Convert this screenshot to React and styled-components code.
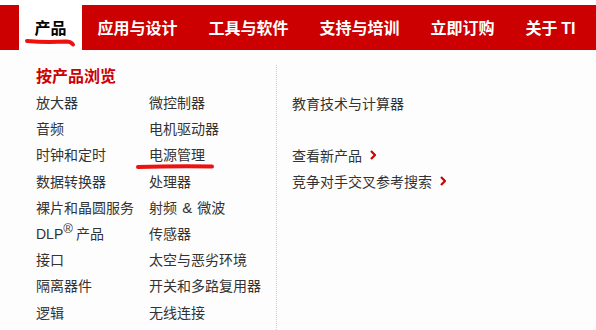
import React from 'react';
import styled, { createGlobalStyle } from 'styled-components';

const GlobalStyle = createGlobalStyle`
    * { box-sizing: border-box; }
    body {
        margin: 0; background: #fff;
        font-family: "Noto Sans CJK SC", "Noto Sans", "Liberation Sans", sans-serif;
    }
    ul { list-style: none; margin: 0; padding: 0; }
`;

const Page = styled.div`
    position: relative;
    width: 596px; height: 330px; padding-top: 5px;
    overflow: hidden;
`;

const NavBar = styled.ul`
    display: flex; height: 45px; padding-left: 19px;
    background-color: #cc0000;
`;

const NavItem = styled.li`
    padding: 0 15.5px; line-height: 45px;
    font-size: 16px; font-weight: bold; white-space: nowrap;
    color: ${(p) => (p.$active ? '#000' : '#fff')};
    background-color: ${(p) => (p.$active ? '#fff' : 'transparent')};
    .latin { font-family: "Liberation Sans", sans-serif; font-weight: bold; }
`;

const Panel = styled.div`
    display: flex; height: 280px; padding-top: 15px;
    background-color: #fdfdfd;
`;

const LeftCol = styled.div`
    width: 277px; padding-left: 36px;
    border-right: 1px dotted #cfcfcf;
`;

const Heading = styled.h3`
    margin: 0 0 4px; height: 20px; line-height: 20px;
    font-size: 16px; font-weight: bold; color: #cc0000;
`;

const ProductGrid = styled.ul`
    display: grid; grid-template-columns: 113px 1fr;
`;

const Item = styled.li`
    height: 26.2px; line-height: 26.2px;
    font-size: 14px; color: #333; white-space: nowrap;
    sup { font-size: 13px; line-height: 0; font-family: "Liberation Sans", sans-serif; }
    .latin { font-family: "Liberation Sans", sans-serif; }
    .amp { font-family: "Liberation Sans", sans-serif; font-size: 15px; margin: 0 2px; }
`;

const RightCol = styled.ul`
    padding: 24.5px 0 0 15px;
`;

const LinkItem = styled(Item)`
    display: flex; align-items: center; gap: 8px;
    margin-top: ${(p) => (p.$gap ? '26.2px' : '0')};
`;

const Annotation = styled.svg`
    position: absolute; left: 0; top: 0;
    pointer-events: none;
`;

const Chevron = () => (
    <svg width="6" height="10" viewBox="0 0 6 10">
        <polyline points="1,1 5,5 1,9" fill="none" stroke="#cc0000" strokeWidth="2.2" />
    </svg>
);

const navs = ['产品', '应用与设计', '工具与软件', '支持与培训', '立即订购'];

const products = [
    ['放大器', '微控制器'],
    ['音频', '电机驱动器'],
    ['时钟和定时', '电源管理'],
    ['数据转换器', '处理器'],
    ['裸片和晶圆服务', 'RF'],
    ['DLP', '传感器'],
    ['接口', '太空与恶劣环境'],
    ['隔离器件', '开关和多路复用器'],
    ['逻辑', '无线连接'],
];

function renderProduct(p) {
    if (p === 'DLP') return <><span className="latin">DLP</span><sup>®</sup> 产品</>;
    if (p === 'RF') return <>射频 <span className="amp">&amp;</span> 微波</>;
    return p;
}

function App() {
    return (
        <>
            <GlobalStyle />
            <Page>
                <NavBar>
                    {navs.map((n, i) => (
                        <NavItem key={n} $active={i === 0}>{n}</NavItem>
                    ))}
                    <NavItem>关于 <span className="latin">TI</span></NavItem>
                </NavBar>
                <Panel>
                    <LeftCol>
                        <Heading>按产品浏览</Heading>
                        <ProductGrid>
                            {products.flat().map((p, i) => (
                                <Item key={i}>{renderProduct(p)}</Item>
                            ))}
                        </ProductGrid>
                    </LeftCol>
                    <RightCol>
                        <Item>教育技术与计算器</Item>
                        <LinkItem $gap>查看新产品 <Chevron /></LinkItem>
                        <LinkItem>竞争对手交叉参考搜索 <Chevron /></LinkItem>
                    </RightCol>
                </Panel>
                <Annotation width="596" height="330">
                    <path d="M27 41 Q45 42.5 66 41.5 Q71 41.5 73 44.5" fill="none" stroke="#ee1111" strokeWidth="4" strokeLinecap="round" />
                    <path d="M138 167 Q175 166 212 166.5" fill="none" stroke="#ee1111" strokeWidth="4" strokeLinecap="round" />
                </Annotation>
            </Page>
        </>
    );
}

export default App;
